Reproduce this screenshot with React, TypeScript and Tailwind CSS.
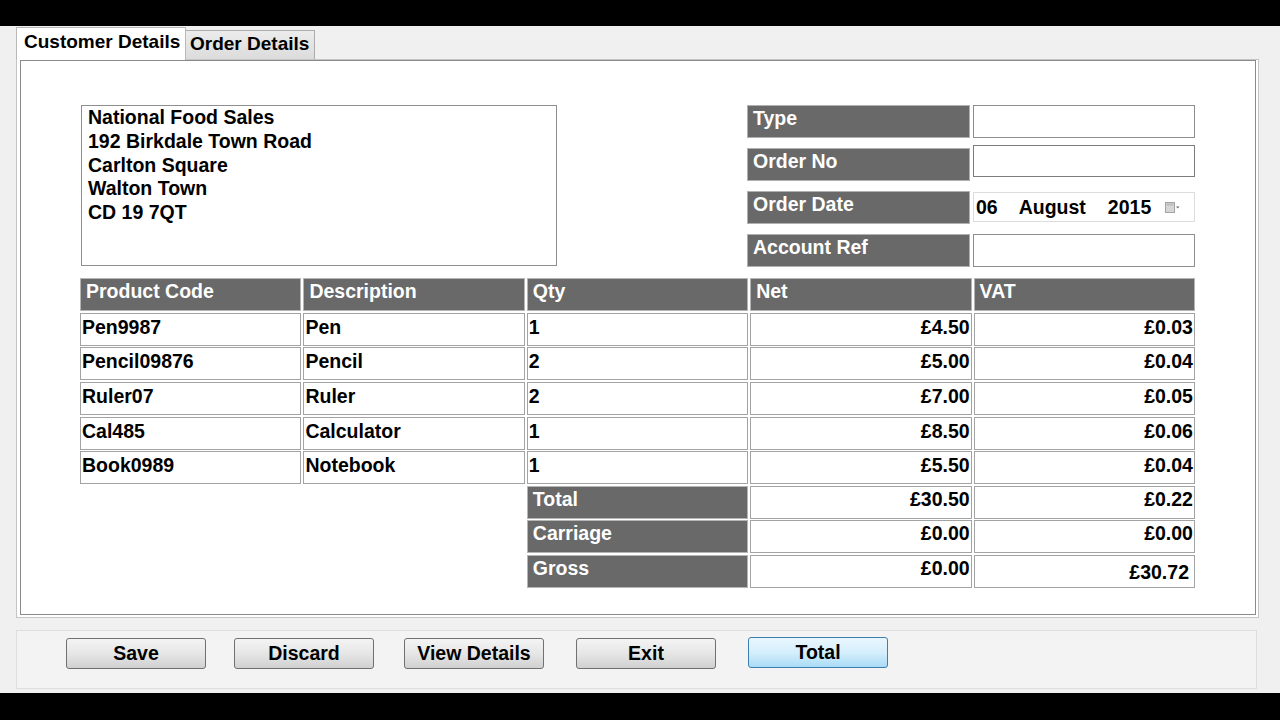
import React from 'react'

const rows = [
  ['Pen9987', 'Pen', '1', '£4.50', '£0.03'],
  ['Pencil09876', 'Pencil', '2', '£5.00', '£0.04'],
  ['Ruler07', 'Ruler', '2', '£7.00', '£0.05'],
  ['Cal485', 'Calculator', '1', '£8.50', '£0.06'],
  ['Book0989', 'Notebook', '1', '£5.50', '£0.04'],
]

const totals = [
  { label: 'Total', net: '£30.50', vat: '£0.22' },
  { label: 'Carriage', net: '£0.00', vat: '£0.00' },
  { label: 'Gross', net: '£0.00', vat: '£30.72' },
]

const headers = ['Product Code', 'Description', 'Qty', 'Net', 'VAT']

const formFields = [
  { label: 'Type', input: 'mt-0 h-[33px] border border-[#8e8e8e]' },
  { label: 'Order No', input: '-mt-[3px] h-[32px] border border-[#7c7c7c]' },
  { label: 'Order Date', input: 'date' },
  { label: 'Account Ref', input: 'mt-0 h-[33px] border border-[#8e8e8e]' },
]

function CalendarIcon() {
  return (
    <svg width="15" height="11" viewBox="0 0 15 11">
      <rect x="0.5" y="0.5" width="9" height="10" fill="#d6d6d6" stroke="#a4a4a4" />
      <rect x="1.5" y="1.5" width="7" height="2" fill="#bcbcbc" />
      <path d="M11 4.5 L14.5 4.5 L12.75 6.5 Z" fill="#6a6a6a" />
    </svg>
  )
}

function WinButton({ label, active, className }: { label: string; active?: boolean; className?: string }) {
  return (
    <button
      className={
        (active
          ? 'w-[140px] h-[31px] -mt-[1px] rounded-[3px] border border-[#3c7fb1] bg-gradient-to-b from-[#eaf6fd] via-[#d5effc] to-[#a9dbf6] text-[19.5px] font-bold text-black leading-none'
          : 'w-[140px] h-[31px] rounded-[3px] border border-[#707070] bg-gradient-to-b from-[#f4f4f4] via-[#e6e6e6] to-[#d0d0d0] text-[19.5px] font-bold text-black leading-none') +
        ' ' +
        (className ?? '')
      }
    >
      {label}
    </button>
  )
}

export default function App() {
  return (
    <div className="w-[1280px] h-[720px] bg-black flex flex-col font-['Liberation_Sans',Arial,sans-serif] text-black overflow-hidden">
      <div className="h-[26px] shrink-0" />

      <div className="h-[667px] shrink-0 bg-[#f0f0f0] pl-[16px] flex flex-col">
        {/* Tabs */}
        <div className="flex items-end h-[33px]">
          <div className="relative z-10 -mb-px w-[170px] h-[33px] bg-white border-l border-t border-r border-[#b9b9b9] pl-[7px] pt-[2px] text-[19px] font-bold leading-[24px] whitespace-nowrap">
            Customer Details
          </div>
          <div className="-ml-px w-[130px] h-[29px] bg-gradient-to-b from-[#ececec] to-[#dcdcdc] border-l border-t border-r border-[#acacac] pl-[4px] pt-[1px] text-[19px] font-bold leading-[24px] whitespace-nowrap">
            Order Details
          </div>
        </div>

        {/* Tab page */}
        <div className="w-[1243px] h-[559px] bg-white border border-[#c4c4c4] pl-[3px] pr-[2px] pb-[2px]">
          <div className="h-[555px] border border-[#8a8a8a] pl-[59px] pt-[44px]">
            <div className="flex items-start">
              <div className="ml-[1px] w-[476px] h-[161px] border border-[#8e8e8e] pl-[6px] text-[19.5px] font-bold leading-[23.75px]">
                <div>National Food Sales</div>
                <div>192 Birkdale Town Road</div>
                <div>Carlton Square</div>
                <div>Walton Town</div>
                <div>CD 19 7QT</div>
              </div>

              <div className="ml-[190px] flex flex-col gap-[10px]">
                {formFields.map((f) => (
                  <div key={f.label} className="flex items-start gap-[3px]">
                    <div className="w-[223px] h-[33px] bg-[#696969] border border-[#b0b0b0] pl-[5px] text-[19.5px] font-bold text-white leading-[24px]">
                      {f.label}
                    </div>
                    {f.input === 'date' ? (
                      <div className="mt-[1px] w-[222px] h-[30px] border border-[#dcdcdc] bg-white flex items-center text-[19.5px] font-bold leading-[24px] pl-[2px]">
                        <span>06</span>
                        <span className="ml-[21px]">August</span>
                        <span className="ml-[22px]">2015</span>
                        <span className="ml-[14px] mt-[1px]">
                          <CalendarIcon />
                        </span>
                      </div>
                    ) : (
                      <div className={'w-[222px] bg-white ' + f.input} />
                    )}
                  </div>
                ))}
              </div>
            </div>

            {/* Grid */}
            <div className="mt-[11px] w-[1115px] grid grid-cols-5 gap-x-[2px] gap-y-[1.65px] text-[19.5px] font-bold leading-[24px]">
              {headers.map((h) => (
                <div key={h} className="h-[33px] bg-[#696969] border border-[#b5b5b5] pl-[5px] text-white">
                  {h}
                </div>
              ))}

              {rows.map((r) =>
                r.map((c, i) => (
                  <div
                    key={r[0] + i}
                    className={
                      i > 2
                        ? 'h-[33px] border border-[#a3a3a3] pt-[1px] pr-[1px] text-right'
                        : 'h-[33px] border border-[#a3a3a3] pt-[1px] pl-[1px]'
                    }
                  >
                    {c}
                  </div>
                ))
              )}

              {totals.map((t) => (
                <React.Fragment key={t.label}>
                  <div className="col-start-3 h-[33px] bg-[#696969] border border-[#b5b5b5] pl-[5px] text-white">
                    {t.label}
                  </div>
                  <div className="h-[33px] border border-[#a3a3a3] pr-[1px] text-right">{t.net}</div>
                  <div
                    className={
                      t.label === 'Gross'
                        ? 'h-[33px] border border-[#a3a3a3] pt-[4px] pr-[5px] text-right'
                        : 'h-[33px] border border-[#a3a3a3] pr-[1px] text-right'
                    }
                  >
                    {t.vat}
                  </div>
                </React.Fragment>
              ))}
            </div>
          </div>
        </div>

        {/* Button bar */}
        <div className="mt-[12px] w-[1241px] h-[59px] border border-[#dedede] bg-[#f3f3f3] pt-[7px] pl-[49px] flex items-start">
          <WinButton label="Save" />
          <WinButton label="Discard" className="ml-[28px]" />
          <WinButton label="View Details" className="ml-[30px]" />
          <WinButton label="Exit" className="ml-[32px]" />
          <WinButton label="Total" active className="ml-[32px]" />
        </div>
      </div>
    </div>
  )
}
